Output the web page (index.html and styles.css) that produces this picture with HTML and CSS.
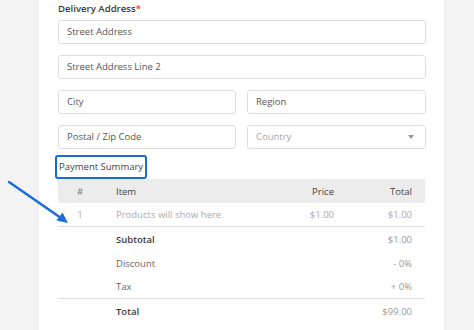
FILE: index.html
```html
<!DOCTYPE html>
<html>
<head>
<meta charset="utf-8">
<link rel="stylesheet" href="styles.css">
</head>
<body>
<div class="panel">
  <div class="label">Delivery Address<span class="req">*</span></div>
  <div class="fields">
    <div class="input">Street Address</div>
    <div class="input">Street Address Line 2</div>
    <div class="row">
      <div class="input">City</div>
      <div class="input">Region</div>
    </div>
    <div class="row">
      <div class="input">Postal / Zip Code</div>
      <div class="input select"><span class="ph">Country</span><span class="caret"></span></div>
    </div>
  </div>
  <div class="section"><span class="section-title">Payment Summary</span></div>
  <div class="table">
    <div class="tr head">
      <div class="c-num">#</div>
      <div class="c-item">Item</div>
      <div class="c-price">Price</div>
      <div class="c-total">Total</div>
    </div>
    <div class="tr item-row line">
      <div class="c-num">1</div>
      <div class="c-item">Products will show here</div>
      <div class="c-price">$1.00</div>
      <div class="c-total">$1.00</div>
    </div>
    <div class="tr sum">
      <div class="c-num"></div>
      <div class="c-item strong">Subtotal</div>
      <div class="c-price"></div>
      <div class="c-total">$1.00</div>
    </div>
    <div class="tr sum">
      <div class="c-num"></div>
      <div class="c-item">Discount</div>
      <div class="c-price"></div>
      <div class="c-total">- 0%</div>
    </div>
    <div class="tr sum line">
      <div class="c-num"></div>
      <div class="c-item">Tax</div>
      <div class="c-price"></div>
      <div class="c-total">+ 0%</div>
    </div>
    <div class="tr sum">
      <div class="c-num"></div>
      <div class="c-item strong">Total</div>
      <div class="c-price"></div>
      <div class="c-total">$99.00</div>
    </div>
  </div>
</div>
<svg class="arrow" width="80" height="240" viewBox="0 0 80 240">
  <line x1="9" y1="182" x2="61" y2="218" stroke="#1b6ed8" stroke-width="2.6" stroke-linecap="round"/>
  <polygon points="68,223 56.5,220.5 62.5,212.5" fill="#1b6ed8"/>
</svg>
</body>
</html>
```
FILE: styles.css
```css
html, body {
  margin: 0;
  padding: 0;
  height: 100%;
}
body {
  background: #f3f3f3;
  font-family: "Open Sans", "Liberation Sans", sans-serif;
  font-size: 9.5px;
  color: #555;
  overflow: hidden;
}
.panel {
  margin-left: 39px;
  width: 368px;
  min-height: 330px;
  padding: 2px 18px 0 19px;
  background: #fff;
  box-shadow: 0 0 4px rgba(0, 0, 0, 0.06);
}
.label {
  font-weight: 600;
  color: #3a3a3a;
  line-height: 14px;
  height: 14px;
  font-size: 9.6px;
}
.req {
  color: #e0383e;
}
.fields {
  margin-top: 4px;
  display: flex;
  flex-direction: column;
  gap: 11px;
}
.row {
  display: grid;
  grid-template-columns: 178px 179px;
  gap: 11px;
}
.input {
  box-sizing: border-box;
  height: 24px;
  border: 1px solid #dedede;
  border-radius: 3px;
  padding: 0 8px;
  line-height: 22px;
  color: #555;
  display: flex;
  align-items: center;
}
.select {
  justify-content: space-between;
}
.ph {
  color: #a6a6a6;
}
.caret {
  width: 0;
  height: 0;
  border-left: 3.5px solid transparent;
  border-right: 3.5px solid transparent;
  border-top: 4px solid #9a9a9a;
  margin-right: 3px;
}
.section {
  margin-top: 6px;
  height: 24px;
}
.section-title {
  display: inline-block;
  box-sizing: border-box;
  height: 24px;
  margin-left: -3px;
  padding: 0 2px 0 2px;
  border: 2px solid #1a6ad6;
  border-radius: 3px;
  line-height: 20px;
  color: #444;
}
.table {
  width: 367px;
}
.tr {
  display: grid;
  grid-template-columns: 44px 1fr 80px 91px;
  height: 24px;
  align-items: center;
  box-sizing: border-box;
}
.line {
  border-bottom: 1px solid #dfdfdf;
}
.head {
  background: #ececec;
  color: #444;
}
.c-num {
  text-align: center;
}
.c-item {
  padding-left: 14px;
}
.c-price {
  text-align: right;
}
.c-total {
  text-align: right;
  padding-right: 13px;
}
.item-row {
  color: #aaa;
}
.head .c-num {
  color: #777;
}
.sum .c-item {
  color: #666;
}
.sum .c-item.strong {
  font-weight: 600;
  color: #3a3a3a;
}
.sum .c-total {
  color: #999;
}
.arrow {
  position: absolute;
  left: 0;
  top: 0;
}
```
